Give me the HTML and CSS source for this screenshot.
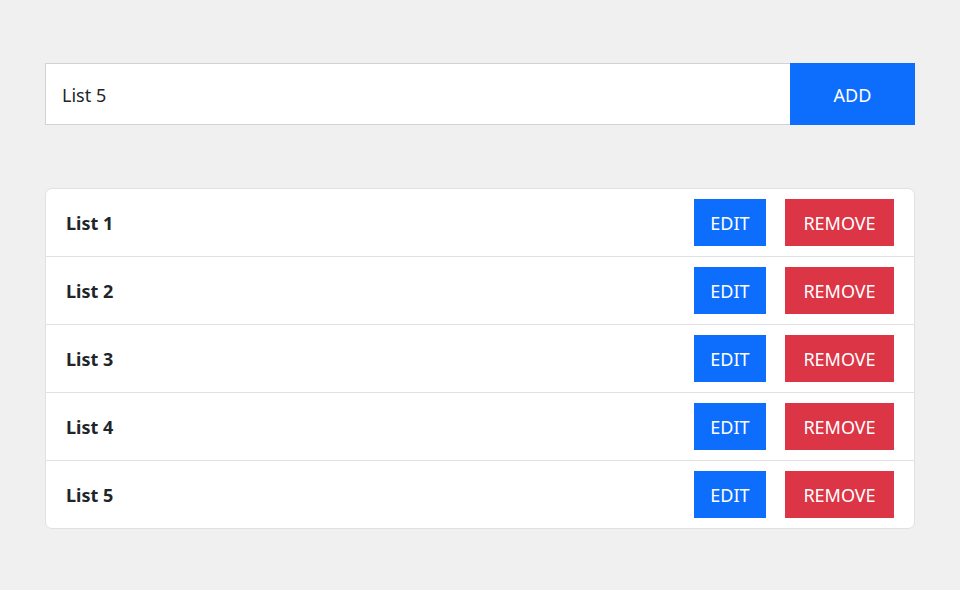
FILE: index.html
```html
<!DOCTYPE html>
<html>
<head>
<meta charset="utf-8">
<link rel="stylesheet" href="styles.css">
</head>
<body>
<main class="app">
  <form class="add-form">
    <input class="add-input" type="text" value="List 5">
    <button class="btn btn-blue add-btn" type="button">ADD</button>
  </form>
  <ul class="lists">
    <li class="item"><span class="name">List 1</span><div class="actions"><button class="btn btn-blue">EDIT</button><button class="btn btn-red">REMOVE</button></div></li>
    <li class="item"><span class="name">List 2</span><div class="actions"><button class="btn btn-blue">EDIT</button><button class="btn btn-red">REMOVE</button></div></li>
    <li class="item"><span class="name">List 3</span><div class="actions"><button class="btn btn-blue">EDIT</button><button class="btn btn-red">REMOVE</button></div></li>
    <li class="item"><span class="name">List 4</span><div class="actions"><button class="btn btn-blue">EDIT</button><button class="btn btn-red">REMOVE</button></div></li>
    <li class="item"><span class="name">List 5</span><div class="actions"><button class="btn btn-blue">EDIT</button><button class="btn btn-red">REMOVE</button></div></li>
  </ul>
</main>
</body>
</html>
```
FILE: styles.css
```css
* { box-sizing: border-box; }
html, body { margin: 0; padding: 0; }
body {
  background: #f0f0f0;
  font-family: "Noto Sans", "Open Sans", sans-serif;
  color: #212529;
  width: 960px;
  height: 590px;
  overflow: hidden;
}
.app {
  padding: 63px 45px 0 45px;
}
.add-form {
  display: flex;
  height: 62px;
  margin: 0;
}
.add-input {
  flex: 1;
  min-width: 0;
  height: 62px;
  border: 1px solid #ced4da;
  border-right: none;
  background: #fff;
  padding: 2px 16px 0 16px;
  font: inherit;
  font-size: 18px;
  color: #212529;
  outline: none;
}
.btn {
  border: none;
  font-family: inherit;
  font-size: 18px;
  color: #fff;
  cursor: pointer;
  padding: 0;
}
.btn-blue { background: #0d6efd; }
.btn-red { background: #dc3545; }
.add-btn {
  width: 125px;
  height: 62px;
  padding-top: 2px;
}
.lists {
  list-style: none;
  margin: 63px 0 0 0;
  padding: 0;
  background: #fff;
  border: 1px solid #dee2e6;
  border-radius: 7px;
}
.item {
  display: flex;
  align-items: center;
  justify-content: space-between;
  height: 68px;
  padding: 0 20px;
  border-top: 1px solid #dee2e6;
}
.item:first-child {
  border-top: none;
  height: 67px;
}
.name {
  font-weight: 700;
  font-size: 18px;
}
.actions {
  display: flex;
  gap: 19px;
}
.actions .btn {
  height: 47px;
  padding: 0 16px;
}
.actions .btn-blue { width: 72px; }
.actions .btn-red { width: 109px; }
```
